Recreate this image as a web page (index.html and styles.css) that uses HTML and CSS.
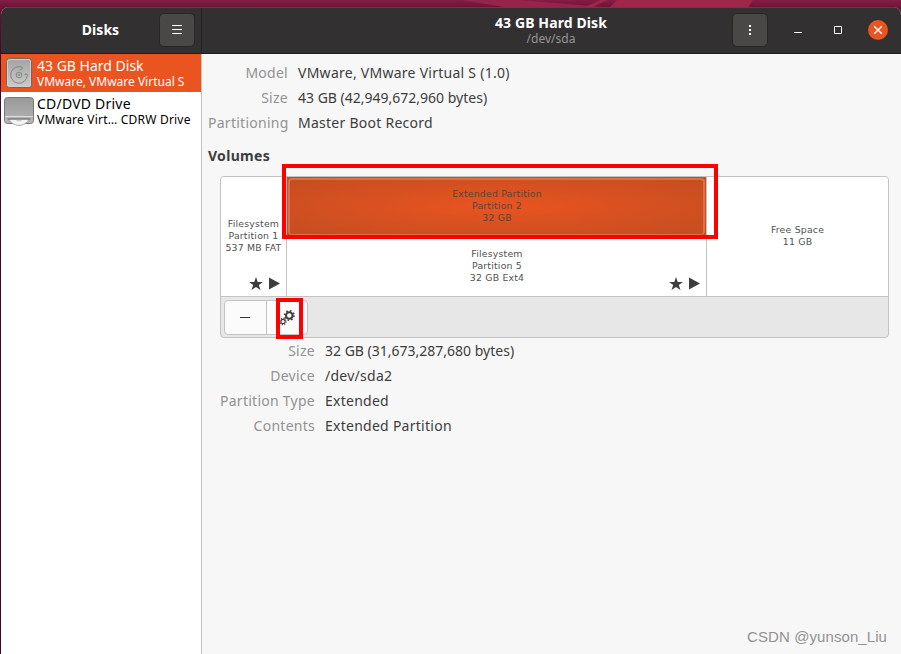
FILE: index.html
```html
<!DOCTYPE html>
<html lang="en">
<head>
<meta charset="utf-8">
<title>Disks</title>
<link rel="stylesheet" href="styles.css">
</head>
<body>
<svg class="wallpaper" width="901" height="20" aria-hidden="true">
  <path d="M462 0H520L615 8H510Z" fill="#94254a"/>
  <path d="M600 0H608L590 8H583ZM617 0H753L748 8H609Z" fill="#9b2749"/>
</svg>
<div class="window">
  <header class="titlebar">
    <div class="side-head">
      <h1 class="app-title">Disks</h1>
      <button class="head-btn" aria-label="Menu"><svg width="11" height="10"><path d="M0 .5h10M0 4.500h10M0 8.500h10" stroke="#fff"/></svg></button>
    </div>
    <div class="main-head">
      <div class="heading"><h2>43 GB Hard Disk</h2><p>/dev/sda</p></div>
      <button class="head-btn" aria-label="Drive options"><svg width="2" height="10"><path d="M0 0h2v2H0zM0 4h2v2H0zM0 8h2v2H0z" fill="#fff"/></svg></button>
      <div class="controls">
        <svg width="20" height="20"><path d="M6 12.5h8" stroke="#fff"/></svg>
        <svg width="20" height="20"><path d="M6.5 6.5h7v7h-7z" fill="none" stroke="#fff"/></svg>
        <svg width="20" height="20"><circle cx="10" cy="10" r="10" fill="#e95420"/><path d="m6.200 6.200 7.600 7.600m0-7.600-7.600 7.600" stroke="#fff" stroke-width="1.400"/></svg>
      </div>
    </div>
  </header>
  <div class="content">
    <aside class="sidebar">
      <div class="drive selected">
        <svg width="32" height="32" viewBox="0 0 32 32">
          <defs><linearGradient id="metal" x2="0" y2="1"><stop stop-color="#a3a3a3"/><stop offset="1" stop-color="#ccc"/></linearGradient></defs>
          <rect x="3.500" y="1.500" width="25" height="29" rx="3" fill="url(#metal)" stroke="#75645d"/>
          <rect x="4.500" y="2.500" width="23" height="27" rx="2" fill="none" stroke="#d0d0d0"/>
          <g fill="none" stroke="#858585"><path d="M19 10.200A8.300 8.300 0 1 0 24.300 18c0-1.500-2.300-1.500-2.800 0"/><path d="M19 10.200c1 1.800-.5 2.600-2.500 2.600"/><circle cx="16" cy="18" r="2.800"/></g><circle cx="16" cy="18" r="1" fill="#858585"/>
        </svg>
        <div class="drive-text"><span class="name">43 GB Hard Disk</span><span class="desc">VMware, VMware Virtual S</span></div>
      </div>
      <div class="drive">
        <svg width="32" height="32" viewBox="0 0 32 32">
          <defs><linearGradient id="lid" x2="0" y2="1"><stop stop-color="#999"/><stop offset="1" stop-color="#b4b4b4"/></linearGradient></defs>
          <rect x="1.500" y="2.500" width="29" height="26" rx="3" fill="url(#lid)" stroke="#777"/>
          <path d="M2 22h28v4a2 2 0 0 1-2 2H4a2 2 0 0 1-2-2z" fill="#b4b4b4"/>
          <path d="M2 21.500h28" stroke="#ddd"/>
          <path d="M6 24c3.500 8.500 16.500 8.500 20 0z" fill="#f4f4f4" stroke="#999" stroke-width=".8"/><path d="M13 24.500a3 2 0 0 0 6 0" fill="#ccc"/>
          <path d="M4.500 24h23" stroke="#666"/>
        </svg>
        <div class="drive-text"><span class="name wide">CD/DVD Drive</span><span class="desc wide">VMware Virt… CDRW Drive</span></div>
      </div>
    </aside>
    <main>
      <dl class="info drive-info">
        <dt>Model</dt><dd>VMware, VMware Virtual S (1.0)</dd>
        <dt>Size</dt><dd class="size">43 GB (42,949,672,960 bytes)</dd>
        <dt>Partitioning</dt><dd>Master Boot Record</dd>
      </dl>
      <h3>Volumes</h3>
      <section class="volumes">
        <div class="map">
          <div class="cell"><p>Filesystem<br>Partition 1<br>537 MB FAT</p>
            <svg class="marks" width="32" height="14"><path d="m7 0 1.700 5H14L9.800 8.100 11.500 13 7 10 2.500 13 4.200 8.100 0 5h5.300zM20 .5v12L31 6.500z" fill="#3d3d3d"/></svg></div>
          <div class="extended">
            <div class="cell picked"><p>Extended Partition<br>Partition 2<br>32 GB</p><div class="callout callout-partition"></div></div>
            <div class="cell"><p>Filesystem<br>Partition 5<br>32 GB Ext4</p>
              <svg class="marks" width="32" height="14"><path d="m7 0 1.700 5H14L9.800 8.100 11.500 13 7 10 2.500 13 4.200 8.100 0 5h5.300zM20 .5v12L31 6.500z" fill="#3d3d3d"/></svg></div>
          </div>
          <div class="cell"><p>Free Space<br>11 GB</p></div>
        </div>
        <div class="toolbar">
          <div class="group">
            <button aria-label="Delete partition"><svg width="10" height="2"><path d="M0 .5h10" stroke="#333"/></svg></button>
            <button aria-label="Partition options"><svg width="16" height="16" fill="none" stroke="#3d3d3d">
              <circle cx="10.300" cy="5.500" r="3.300" stroke-width="2"/><circle cx="10.300" cy="5.500" r="4.700" stroke-width="1.600" stroke-dasharray="1.6 2.090"/>
              <circle cx="4" cy="11.500" r="2.100" stroke-width="1.100"/><circle cx="4" cy="11.500" r="3.100" stroke-width="1.100" stroke-dasharray="1.1 1.335"/>
            </svg></button>
          </div>
          <div class="callout callout-gear"></div>
        </div>
      </section>
      <dl class="info volume-info">
        <dt>Size</dt><dd class="size">32 GB (31,673,287,680 bytes)</dd>
        <dt>Device</dt><dd>/dev/sda2</dd>
        <dt>Partition Type</dt><dd>Extended</dd>
        <dt>Contents</dt><dd>Extended Partition</dd>
      </dl>
      <p class="watermark">CSDN @yunson_Liu</p>
    </main>
  </div>
</div>
</body>
</html>
```
FILE: styles.css
```css
* { box-sizing: border-box; }
body {
  margin: 0;
  height: 654px;
  padding: 7px 0 0 1px;
  overflow: hidden;
  background: linear-gradient(#851d45, #6b1438 7px, #380820 60px);
  font: 14px/25px "Noto Sans", "Open Sans", sans-serif;
  color: #3d3d3d;
}
h1, h2, h3, p, dl, dd { margin: 0; }
button { padding: 0; border: 0; display: flex; align-items: center; justify-content: center; }
svg { display: block; flex: none; }
.wallpaper { position: absolute; left: 0; top: 0; }
.window { position: relative; width: 900px; height: 647px; display: flex; flex-direction: column; border-radius: 8px 8px 0 0; overflow: hidden; background: #f7f7f7; }
.titlebar { height: 47px; flex: none; display: flex; background: #323030; border-top: 1px solid #4b4949; border-bottom: 1px solid #1d1c1c; color: #fff; padding-bottom: 1px; }
.side-head { width: 201px; display: flex; align-items: center; border-right: 1px solid #222; padding-right: 6px; }
.app-title { flex: 1; text-align: center; font-size: 14px; font-weight: 700; padding: 0 0 2px 41px; letter-spacing: .05px; }
.head-btn { width: 36px; height: 34px; border: 1px solid #282727; border-radius: 5px; background: #494846; flex: none; }
.main-head { flex: 1; display: flex; align-items: center; padding-right: 13px; }
.heading { flex: 1; text-align: center; padding-left: 168px; }
.heading h2 { font-size: 14px; line-height: 16px; letter-spacing: .1px; }
.heading p { font-size: 12px; line-height: 15px; color: #969595; }
.controls { display: flex; gap: 20px; margin-left: 20px; }
.content { flex: 1; display: flex; min-height: 0; }
.sidebar { width: 201px; border-right: 1px solid #c4c4c4; background: #fff; }
.drive { display: flex; height: 38px; padding: 3px 0 0 2px; color: #000; white-space: nowrap; }
.drive.selected { background: #e95420; color: #fff; }
.drive-text { display: flex; flex-direction: column; padding-left: 2px; }
.name { line-height: 17px; }
.desc { font-size: 12px; line-height: 15px; }
.name.wide, .desc.wide { letter-spacing: .21px; }
main { flex: 1; display: flex; flex-direction: column; padding: 6px 12px 0 6px; }
.info { display: grid; column-gap: 10px; grid-auto-rows: 25px; white-space: nowrap; letter-spacing: .26px; }
.drive-info { grid-template-columns: 80px auto; }
.volume-info { grid-template-columns: 95px auto; padding-left: 12px; }
dt { text-align: right; color: #929292; }
dd.size { letter-spacing: 0; }
h3 { font-size: 14px; line-height: 25px; margin-top: 8px; letter-spacing: .3px; }
.volumes { margin: 8px 0 0 12px; height: 162px; border: 1px solid #c3c3c3; border-radius: 4px; background: #e7e7e7; flex: none; }
.map { height: 120px; display: grid; grid-template-columns: 65px 419px 181px; column-gap: 1px; background: #c3c3c3; border-bottom: 1px solid #c3c3c3; border-radius: 3px 3px 0 0; }
.cell { position: relative; display: flex; align-items: center; justify-content: center; padding-bottom: 2px; background: #fff; text-align: center; font: 9.330px/12px "DejaVu Sans", sans-serif; letter-spacing: .2px; color: #515151; white-space: nowrap; }
.map > .cell:first-child { border-radius: 3px 0 0; }
.map > .cell:last-child { border-radius: 0 3px 0 0; }
.extended { display: grid; grid-template-rows: 59px 60px; }
.extended .cell:last-child { padding: 0 0 0 1px; }
.picked { background: radial-gradient(ellipse farthest-corner, #e95420, #c34d21); color: #5d4436; }
.picked::before { content: ""; position: absolute; inset: 1px; border: 2px solid #de7049; border-width: 2px 2px 1px; border-radius: 4px; }
.picked p { position: relative; padding-left: 1px; }
.marks { position: absolute; right: 5px; bottom: 5px; }
.callout { position: absolute; border: 4px solid #f00; pointer-events: none; }
.callout-partition { left: -5px; top: -13px; width: 436px; height: 75px; z-index: 2; }
.toolbar { position: relative; padding: 3px; }
.group { width: 84px; height: 35px; display: flex; border: 1px solid #c3c3c3; border-radius: 4px; background: #fbfbfb; }
.group button { flex: 1; background: none; }
.group button + button { border-left: 1px solid #c3c3c3; }
.callout-gear { left: 55px; top: 1px; width: 27px; height: 41px; }
.watermark { position: absolute; right: 14px; bottom: 6px; font: 15px/22px "Liberation Sans", sans-serif; letter-spacing: .08px; color: #929292; }
```
